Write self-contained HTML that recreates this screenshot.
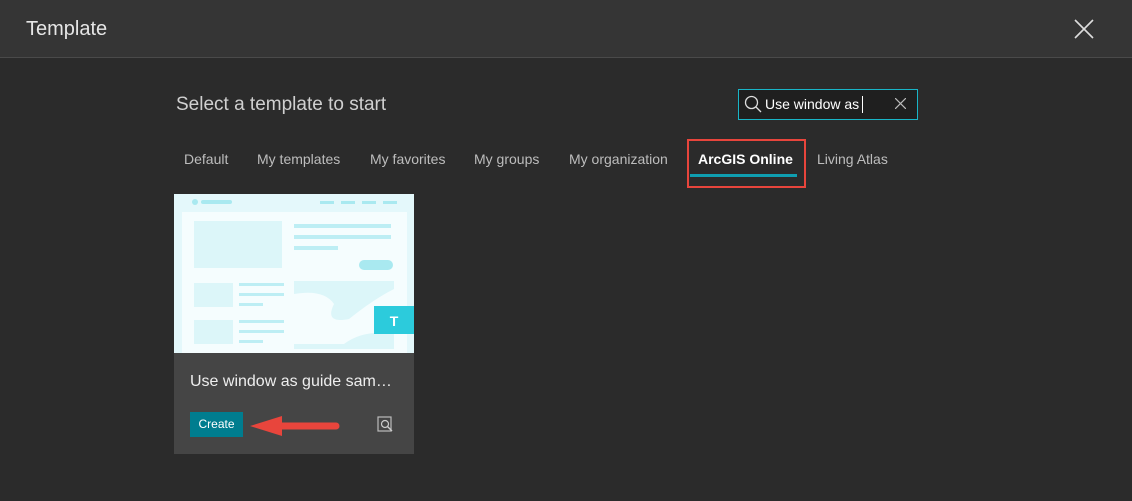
<!DOCTYPE html>
<html><head><style>
body{margin:0;width:1132px;height:501px;background:#2b2b2b;font-family:"Liberation Sans",sans-serif;position:relative;overflow:hidden}
.hdr{position:absolute;left:0;top:0;width:1132px;height:57px;background:#353535;border-bottom:1px solid #4a4a4a}
.t{position:absolute;color:#fff}
.tab{position:absolute;top:151px;font-size:14px;color:#bdbdbd}
</style></head><body>
<div class="hdr"></div>
<div class="t" style="left:26px;top:18px;font-size:20px;color:#e6e6e6">Template</div>
<svg style="position:absolute;left:1074px;top:19px" width="20" height="20"><path d="M1 1L19 19M19 1L1 19" stroke="#ddd" stroke-width="1.6"/></svg>
<div class="t" style="left:176px;top:94px;font-size:19px;color:#d0d0d0">Select a template to start</div>
<div style="position:absolute;left:738px;top:89px;width:178px;height:29px;border:1px solid #19b5c7;background:#1f1f1f"></div>
<svg style="position:absolute;left:744px;top:95px" width="18" height="18"><circle cx="7.5" cy="7.5" r="6" stroke="#ddd" stroke-width="1.3" fill="none"/><path d="M12 12L17 17" stroke="#ddd" stroke-width="1.3"/></svg>
<div class="t" style="left:765px;top:96px;font-size:14px">Use window as</div>
<div style="position:absolute;left:862px;top:96px;width:1px;height:17px;background:#fff"></div>
<svg style="position:absolute;left:895px;top:98px" width="11" height="11"><path d="M0 0L11 11M11 0L0 11" stroke="#bbb" stroke-width="1.2"/></svg>
<div class="tab" style="left:184px">Default</div>
<div class="tab" style="left:257px">My templates</div>
<div class="tab" style="left:370px">My favorites</div>
<div class="tab" style="left:474px">My groups</div>
<div class="tab" style="left:569px">My organization</div>
<div class="tab" style="left:698px;color:#fff;font-weight:bold">ArcGIS Online</div>
<div class="tab" style="left:817px">Living Atlas</div>
<div style="position:absolute;left:690px;top:174px;width:107px;height:3px;background:#0f9eb0"></div>
<div style="position:absolute;left:687px;top:139px;width:115px;height:45px;border:2px solid #e8453c"></div>
<div style="position:absolute;left:174px;top:194px;width:240px;height:260px;background:#454545"></div>
<svg style="position:absolute;left:174px;top:194px" width="240" height="159">
<rect width="240" height="159" fill="#e4f8fb"/>
<rect x="8" y="18" width="225" height="141" fill="#f5fdfe"/>
<circle cx="21" cy="8" r="3" fill="#a9e9f0"/><rect x="27" y="6" width="31" height="4" rx="2" fill="#a9e9f0"/>
<rect x="146" y="7" width="14" height="3" fill="#a9e9f0"/><rect x="167" y="7" width="14" height="3" fill="#a9e9f0"/><rect x="188" y="7" width="14" height="3" fill="#a9e9f0"/><rect x="209" y="7" width="14" height="3" fill="#a9e9f0"/>
<rect x="20" y="27" width="88" height="47" fill="#dcf6f9"/>
<rect x="120" y="30" width="97" height="4" fill="#bdeef4"/><rect x="120" y="41" width="97" height="4" fill="#bdeef4"/><rect x="120" y="52" width="44" height="4" fill="#bdeef4"/>
<rect x="185" y="66" width="34" height="10" rx="5" fill="#a9e9f0"/>
<rect x="20" y="89" width="39" height="24" fill="#dcf6f9"/><rect x="20" y="126" width="39" height="24" fill="#dcf6f9"/>
<rect x="65" y="89" width="45" height="3" fill="#bdeef4"/><rect x="65" y="99" width="45" height="3" fill="#bdeef4"/><rect x="65" y="109" width="24" height="3" fill="#bdeef4"/>
<rect x="65" y="126" width="45" height="3" fill="#bdeef4"/><rect x="65" y="136" width="45" height="3" fill="#bdeef4"/><rect x="65" y="146" width="24" height="3" fill="#bdeef4"/>
<rect x="120" y="87" width="100" height="68" fill="#dcf6f9"/>
<path d="M120 100Q150 95 160 110Q150 130 175 125Q200 105 220 95V140Q190 135 170 150H120Z" fill="#f5fdfe"/>
<rect x="200" y="112" width="40" height="28" fill="#2ccbdc"/>
<text x="220" y="132" font-family="Liberation Sans" font-weight="bold" font-size="14" fill="#fff" text-anchor="middle">T</text>
</svg>
<div class="t" style="left:190px;top:373px;font-size:16px;color:#eee">Use window as guide sam…</div>
<div style="position:absolute;left:190px;top:412px;width:53px;height:25px;background:#007d8f;color:#fff;font-size:12px;line-height:25px;text-align:center">Create</div>
<svg style="position:absolute;left:250px;top:414px" width="92" height="24"><path d="M30 12H86" stroke="#e8453c" stroke-width="7" stroke-linecap="round"/><path d="M0 12L32 2V22Z" fill="#e8453c"/></svg>
<svg style="position:absolute;left:377px;top:416px" width="16" height="16"><rect x="1" y="1" width="13" height="14" fill="none" stroke="#bbb" stroke-width="1.2"/><circle cx="8" cy="8" r="3.5" fill="#454545" stroke="#ccc" stroke-width="1.2"/><path d="M10.5 10.5L15 15" stroke="#ccc" stroke-width="1.4"/></svg>
</body></html>
